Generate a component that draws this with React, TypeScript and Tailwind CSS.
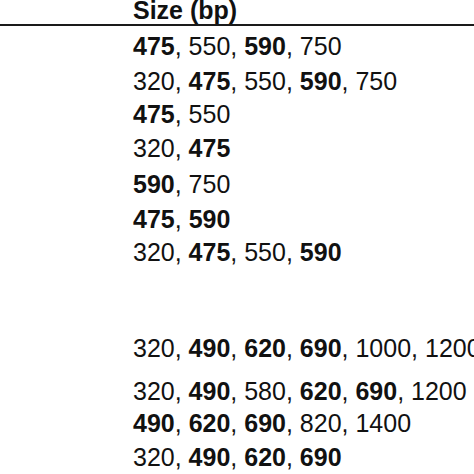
type Part = { t: string; b?: boolean };

const rows: { h: number; parts: Part[] }[] = [
  { h: 35, parts: [{ t: '475', b: true }, { t: ', 550, ' }, { t: '590', b: true }, { t: ', 750' }] },
  { h: 33, parts: [{ t: '320, ' }, { t: '475', b: true }, { t: ', 550, ' }, { t: '590', b: true }, { t: ', 750' }] },
  { h: 34, parts: [{ t: '475', b: true }, { t: ', 550' }] },
  { h: 36, parts: [{ t: '320, ' }, { t: '475', b: true }] },
  { h: 35, parts: [{ t: '590', b: true }, { t: ', 750' }] },
  { h: 33, parts: [{ t: '475', b: true }, { t: ', ' }, { t: '590', b: true }] },
  { h: 96, parts: [{ t: '320, ' }, { t: '475', b: true }, { t: ', 550, ' }, { t: '590', b: true }] },
  { h: 43, parts: [{ t: '320, ' }, { t: '490', b: true }, { t: ', ' }, { t: '620', b: true }, { t: ', ' }, { t: '690', b: true }, { t: ', 1000, 1200' }] },
  { h: 32, parts: [{ t: '320, ' }, { t: '490', b: true }, { t: ', 580, ' }, { t: '620', b: true }, { t: ', ' }, { t: '690', b: true }, { t: ', 1200' }] },
  { h: 34, parts: [{ t: '490', b: true }, { t: ', ' }, { t: '620', b: true }, { t: ', ' }, { t: '690', b: true }, { t: ', 820, 1400' }] },
  { h: 34, parts: [{ t: '320, ' }, { t: '490', b: true }, { t: ', ' }, { t: '620', b: true }, { t: ', ' }, { t: '690', b: true }] },
];

export default function App() {
  return (
    <div
      className="w-[474px] h-[474px] overflow-hidden bg-white text-[#111]"
      style={{ fontFamily: '"Liberation Sans", Arial, sans-serif' }}
    >
      <div className="pl-[133px] h-[20px] text-[25px] leading-[20px] font-bold whitespace-nowrap">Size (bp)</div>
      <div className="mt-[4px] border-t-2 border-[#1a1a1a]" />
      <div className="mt-[3px] flex flex-col">
        {rows.map((r, i) => (
          <div key={i} className="flex">
            <div className="w-[133px] shrink-0" />
            <div
              className="text-[25px] leading-[34px] whitespace-nowrap"
              style={{ height: r.h }}
            >
              {r.parts.map((p, j) => (
                <span key={j} className={p.b ? 'font-bold' : ''}>
                  {p.t}
                </span>
              ))}
            </div>
          </div>
        ))}
      </div>
    </div>
  );
}
